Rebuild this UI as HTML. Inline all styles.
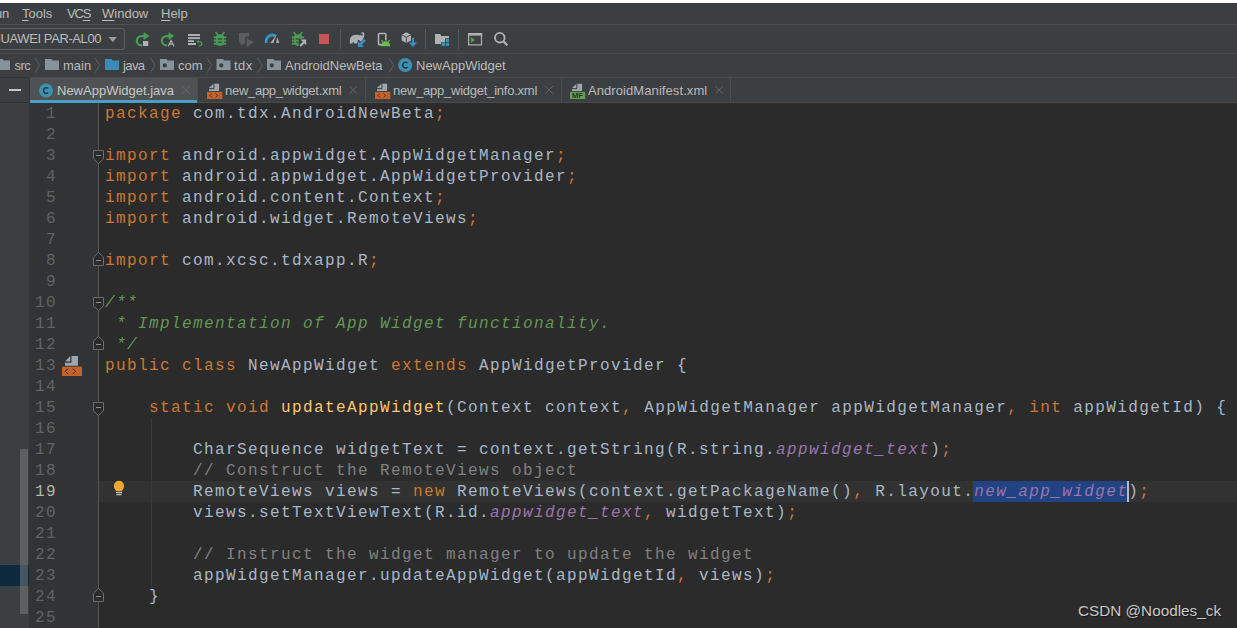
<!DOCTYPE html>
<html><head><meta charset="utf-8">
<style>
*{margin:0;padding:0;box-sizing:border-box}
html,body{width:1237px;height:628px;overflow:hidden;background:#3c3f41;font-family:"Liberation Sans",sans-serif}
.a{position:absolute}
.ui{position:absolute;color:#bbbbbb;font-size:13px;white-space:pre;line-height:16px}
.u{text-decoration:underline;text-underline-offset:2px}
.code{position:absolute;left:105px;font-family:"Liberation Mono",monospace;font-size:16px;letter-spacing:1.4px;line-height:21px;height:21px;white-space:pre;color:#a9b7c6;padding-top:1px}
.ln{position:absolute;left:29px;width:28px;text-align:right;font-family:"Liberation Mono",monospace;font-size:16px;letter-spacing:1.4px;padding-top:1px;line-height:21px;color:#606366;white-space:pre}
.k{color:#cc7832}
.c{color:#808080}
.d{color:#629755;font-style:italic}
.f{color:#9876aa;font-style:italic}
.m{color:#ffc66d}
svg{position:absolute;left:0;top:0}
</style></head><body>
<!-- chrome backgrounds -->
<div class="a" style="left:0;top:0;width:1237px;height:3px;background:#ffffff"></div>
<div class="a" style="left:0;top:24px;width:1237px;height:1px;background:#515151"></div>
<div class="a" style="left:0;top:53px;width:1237px;height:1px;background:#4b4b4b"></div>
<div class="a" style="left:0;top:77px;width:1237px;height:1px;background:#4b4b4b"></div>
<div class="a" style="left:0;top:77px;width:30px;height:1px;background:#2f3133"></div>
<div class="a" style="left:0;top:102px;width:30px;height:1px;background:#2f3133"></div>
<div class="a" style="left:29px;top:78px;width:1px;height:25px;background:#2f3133"></div>
<div class="a" style="left:30px;top:102px;width:1207px;height:1px;background:#4b4b4b"></div>
<!-- tabs -->
<div class="a" style="left:30px;top:78px;width:167px;height:22px;background:#4e5254"></div>
<div class="a" style="left:30px;top:100px;width:167px;height:3px;background:#4a9fc4"></div>
<div class="a" style="left:197px;top:78px;width:1px;height:24px;background:#4a4c4e"></div>
<div class="a" style="left:365px;top:78px;width:1px;height:24px;background:#4a4c4e"></div>
<div class="a" style="left:561px;top:78px;width:1px;height:24px;background:#4a4c4e"></div>
<div class="a" style="left:730px;top:78px;width:1px;height:24px;background:#4a4c4e"></div>
<!-- panels -->
<div class="a" style="left:29px;top:103px;width:70px;height:525px;background:#313335"></div>
<div class="a" style="left:99px;top:103px;width:1138px;height:525px;background:#2b2b2b"></div>
<div class="a" style="left:99px;top:481px;width:1138px;height:21px;background:#323232"></div>
<div class="a" style="left:973px;top:481px;width:154px;height:21px;background:#214283"></div>
<div class="a" style="left:98px;top:103px;width:1px;height:525px;background:#555759"></div>
<div class="a" style="left:0;top:565px;width:29px;height:21px;background:#0d293e"></div>
<div class="a" style="left:20px;top:449px;width:8px;height:165px;background:rgba(120,122,124,0.55)"></div>

<!-- menu -->
<div class="ui" style="left:-14.5px;top:6px">Run</div>
<div class="ui" style="left:22px;top:6px"><span class="u">T</span>ools</div>
<div class="ui" style="left:67px;top:6px;letter-spacing:-1.2px">VC<span class="u">S</span></div>
<div class="ui" style="left:102px;top:6px"><span class="u">W</span>indow</div>
<div class="ui" style="left:161px;top:6px"><span class="u">H</span>elp</div>

<!-- device combo -->
<div class="a" style="left:-5px;top:28px;width:130px;height:22px;border:1px solid #5e6060;border-radius:3px"></div>
<div class="ui" style="left:-8.5px;top:31px;letter-spacing:-0.4px">HUAWEI PAR-AL00</div>

<!-- breadcrumbs -->
<div class="ui" style="left:14.5px;top:58px;letter-spacing:-0.5px">src</div>
<div class="ui" style="left:63px;top:58px">main</div>
<div class="ui" style="left:123px;top:58px;letter-spacing:-0.6px">java</div>
<div class="ui" style="left:178px;top:58px">com</div>
<div class="ui" style="left:234px;top:58px;letter-spacing:0.4px">tdx</div>
<div class="ui" style="left:285px;top:58px">AndroidNewBeta</div>
<div class="ui" style="left:416px;top:58px">NewAppWidget</div>

<!-- tab labels -->
<div class="ui" style="left:57px;top:83px;color:#c8c8c8">NewAppWidget.java</div>
<div class="ui" style="left:225px;top:83px;letter-spacing:-0.28px">new_app_widget.xml</div>
<div class="ui" style="left:393px;top:83px;letter-spacing:-0.24px">new_app_widget_info.xml</div>
<div class="ui" style="left:588px;top:83px;letter-spacing:0.08px">AndroidManifest.xml</div>

<!-- line numbers -->
<div class="ln" style="top:103px">1</div>
<div class="ln" style="top:124px">2</div>
<div class="ln" style="top:145px">3</div>
<div class="ln" style="top:166px">4</div>
<div class="ln" style="top:187px">5</div>
<div class="ln" style="top:208px">6</div>
<div class="ln" style="top:229px">7</div>
<div class="ln" style="top:250px">8</div>
<div class="ln" style="top:271px">9</div>
<div class="ln" style="top:292px">10</div>
<div class="ln" style="top:313px">11</div>
<div class="ln" style="top:334px">12</div>
<div class="ln" style="top:355px">13</div>
<div class="ln" style="top:376px">14</div>
<div class="ln" style="top:397px">15</div>
<div class="ln" style="top:418px">16</div>
<div class="ln" style="top:439px">17</div>
<div class="ln" style="top:460px">18</div>
<div class="ln" style="top:481px;color:#b4b4b4">19</div>
<div class="ln" style="top:502px">20</div>
<div class="ln" style="top:523px">21</div>
<div class="ln" style="top:544px">22</div>
<div class="ln" style="top:565px">23</div>
<div class="ln" style="top:586px">24</div>
<div class="ln" style="top:607px">25</div>

<!-- code -->
<div class="code" style="top:103px"><span class="k">package</span> com.tdx.AndroidNewBeta<span class="k">;</span></div>
<div class="code" style="top:145px"><span class="k">import</span> android.appwidget.AppWidgetManager<span class="k">;</span></div>
<div class="code" style="top:166px"><span class="k">import</span> android.appwidget.AppWidgetProvider<span class="k">;</span></div>
<div class="code" style="top:187px"><span class="k">import</span> android.content.Context<span class="k">;</span></div>
<div class="code" style="top:208px"><span class="k">import</span> android.widget.RemoteViews<span class="k">;</span></div>
<div class="code" style="top:250px"><span class="k">import</span> com.xcsc.tdxapp.R<span class="k">;</span></div>
<div class="code" style="top:292px"><span class="d">/**</span></div>
<div class="code" style="top:313px"><span class="d"> * Implementation of App Widget functionality.</span></div>
<div class="code" style="top:334px"><span class="d"> */</span></div>
<div class="code" style="top:355px"><span class="k">public class </span>NewAppWidget <span class="k">extends </span>AppWidgetProvider {</div>
<div class="code" style="top:397px">    <span class="k">static void </span><span class="m">updateAppWidget</span>(Context context<span class="k">, </span>AppWidgetManager appWidgetManager<span class="k">, int </span>appWidgetId) {</div>
<div class="code" style="top:439px">        CharSequence widgetText = context.getString(R.string.<span class="f">appwidget_text</span>)<span class="k">;</span></div>
<div class="code" style="top:460px">        <span class="c">// Construct the RemoteViews object</span></div>
<div class="code" style="top:481px">        RemoteViews views = <span class="k">new </span>RemoteViews(context.getPackageName()<span class="k">, </span>R.layout.<span class="f">new_app_widget</span>)<span class="k">;</span></div>
<div class="code" style="top:502px">        views.setTextViewText(R.id.<span class="f">appwidget_text</span><span class="k">, </span>widgetText)<span class="k">;</span></div>
<div class="code" style="top:544px">        <span class="c">// Instruct the widget manager to update the widget</span></div>
<div class="code" style="top:565px">        appWidgetManager.updateAppWidget(appWidgetId<span class="k">, </span>views)<span class="k">;</span></div>
<div class="code" style="top:586px">    }</div>

<svg width="1237" height="628" viewBox="0 0 1237 628">
<!-- combo arrow -->
<polygon points="108.5,37 117,37 112.75,42" fill="#9a9da0"/>
<!-- toolbar icon1 -->
<path d="M144.2 36.1 L141.5 36.1 A4.65 4.65 0 0 0 141.5 45.4 L142 45.4" fill="none" stroke="#499c54" stroke-width="2.2"/>
<polygon points="143.6,32 149.4,36 143.6,40" fill="#499c54"/>
<rect x="143" y="41" width="5.2" height="5" fill="#afb1b3"/>
<!-- icon2 -->
<path d="M169.2 36.1 L166.5 36.1 A4.65 4.65 0 0 0 166.5 45.4 L167 45.4" fill="none" stroke="#499c54" stroke-width="2.2"/>
<polygon points="168.6,32 174.4,36 168.6,40" fill="#499c54"/>
<path d="M168.2 46.3 L171.1 40.6 L174 46.3 M169.4 44.2 H172.8" fill="none" stroke="#afb1b3" stroke-width="1.2"/>
<!-- icon3 -->
<rect x="188" y="34" width="12" height="2" fill="#afb1b3"/>
<rect x="188" y="37.2" width="12" height="1.9" fill="#afb1b3"/>
<rect x="188" y="40.2" width="6" height="1.8" fill="#afb1b3"/>
<rect x="188" y="43" width="8" height="2" fill="#afb1b3"/>
<path d="M197.8 41.6 Q201.8 41.2 201.8 43.8 Q201.6 45.9 199 46" fill="none" stroke="#499c54" stroke-width="1.3"/>
<polygon points="196.2,41.6 198.6,39.9 198.6,43.3" fill="#499c54"/>
<!-- icon4 bug -->
<g fill="#499c54">
<path d="M216 37 Q216 34.5 220 34.3 Q224 34.5 224 37 L224 42.2 Q223.7 45.9 220 46 Q216.3 45.9 216 42.2 Z"/>
<rect x="213.8" y="36.4" width="12.4" height="2"/>
<rect x="213.8" y="39.6" width="12.4" height="2"/>
<rect x="213.8" y="42.7" width="12.4" height="2"/>
</g>
<path d="M215.6 32.2 L218.2 35 M224.4 32.2 L221.8 35" stroke="#499c54" stroke-width="1.7"/>
<rect x="217.9" y="38.4" width="4.2" height="1.2" fill="#3c3f41"/>
<rect x="217.9" y="41.6" width="4.2" height="1.1" fill="#3c3f41"/>
<!-- icon5 shield -->
<path d="M238.9 33 L249 33 L249 36.6 L246.3 36.6 Q245.2 36.6 245.2 37.8 L245.2 42.4 Q244.8 44.7 242.7 45 Q239.2 44 238.9 40.2 Z" fill="#5a5d5f"/>
<polygon points="246.7,38 253.9,42.45 246.7,46.9" fill="#5a5d5f"/>
<!-- icon6 gauge -->
<path d="M266.4 42.9 A6.2 6.2 0 0 1 276 36.3" fill="none" stroke="#3592c4" stroke-width="2.9"/>
<polygon points="270.3,43 273.3,43 276.4,35.2" fill="#afb1b3"/>
<polygon points="277.2,37 279.3,43 276.2,43" fill="#afb1b3"/>
<!-- icon7 bug + arrow -->
<g fill="#499c54">
<path d="M294 37 Q294 34.5 298 34.3 Q302 34.5 302 37 L302 38.4 L298.6 38.4 L298.6 46 Q294.3 45.9 294 42.2 Z"/>
<rect x="291.8" y="36.4" width="12.4" height="2"/>
<rect x="291.8" y="39.6" width="6.8" height="2"/>
<rect x="291.8" y="42.7" width="6.8" height="2"/>
</g>
<path d="M293.6 32.2 L296.2 35 M302.4 32.2 L299.8 35" stroke="#499c54" stroke-width="1.7"/>
<rect x="295.9" y="38.4" width="2.7" height="1.2" fill="#3c3f41"/>
<rect x="295.9" y="41.6" width="2.7" height="1.1" fill="#3c3f41"/>
<path d="M300.2 46 L305 41.2" stroke="#afb1b3" stroke-width="2.2"/>
<polygon points="300.6,39.6 306.2,39.6 306.2,45.2" fill="#afb1b3"/>
<!-- icon8 stop -->
<rect x="319" y="34" width="10" height="10" fill="#c75450"/>
<!-- separators -->
<rect x="340" y="29" width="1" height="20" fill="#555759"/>
<rect x="425" y="29" width="1" height="20" fill="#555759"/>
<rect x="458" y="29" width="1" height="20" fill="#555759"/>
<!-- icon9 gradle elephant -->
<path d="M349.8 43.6 L349.8 40.3 Q350.2 36.8 352.6 35.6 Q355.5 34.3 358.5 35 Q359.8 35.4 360.5 35.2 Q360.8 32.3 362.4 32 Q364.4 31.9 364.4 34.5 Q364.3 37.5 362.8 39.6 L361 41.8 L359.6 40.4 L357.8 39.8 L357.2 43.6 L354.3 43.6 L353.9 42.2 L352.7 42.2 L352.4 43.6 Z" fill="#afb1b3"/>
<ellipse cx="361.8" cy="34.5" rx="0.9" ry="1.3" fill="#3c3f41"/>
<path d="M352.8 37.6 Q354 38.6 355.6 37.8" fill="none" stroke="#8c8e90" stroke-width="0.7"/>
<path d="M359.4 45.2 L365 39.9" stroke="#3592c4" stroke-width="2.5"/>
<polygon points="357.8,41 357.8,47.1 364,47.1" fill="#3592c4"/>
<!-- icon10 device -->
<path d="M381.6 44.6 L379.3 44.6 Q378.5 44.6 378.5 43.8 L378.5 34.3 Q378.5 33.5 379.3 33.5 L385 33.5 Q385.8 33.5 385.8 34.3 L385.8 40.5" fill="none" stroke="#afb1b3" stroke-width="1.6"/>
<path d="M380.8 46.2 A4.75 4.9 0 0 1 390.3 46.2 Z" fill="#6cbf4f"/>
<path d="M381.6 40 L383 42.2 M389.5 40 L388.1 42.2" stroke="#6cbf4f" stroke-width="1.1"/>
<!-- icon11 cube + arrow -->
<polygon points="406.3,32.2 411,34.8 411,40.5 406.3,43 401.7,40.5 401.7,34.8" fill="#afb1b3"/>
<path d="M401.7 34.8 L406.3 37.3 L411 34.8 M406.3 37.3 V43" fill="none" stroke="#3c3f41" stroke-width="0.9"/>
<rect x="412.1" y="37.7" width="1.9" height="6" fill="#3592c4"/>
<polygon points="409,42.6 417,42.6 413,47.1" fill="#3592c4"/>
<!-- icon12 folder -->
<path d="M435 34.1 L440.3 34.1 L441.1 35.9 L449 35.9 L449 38.3 L445 38.3 L445 42.3 L441 42.3 L441 44 L435 44 Z" fill="#afb1b3"/>
<rect x="445.8" y="38.9" width="3.2" height="3.2" fill="#3592c4"/>
<rect x="441.7" y="42.8" width="3.2" height="3.2" fill="#3592c4"/>
<rect x="445.8" y="42.8" width="3.2" height="3.2" fill="#3592c4"/>
<!-- icon13 window -->
<rect x="468.6" y="33.6" width="12.9" height="11.3" fill="none" stroke="#afb1b3" stroke-width="1.2"/>
<rect x="468" y="33" width="14.1" height="2.6" fill="#afb1b3"/>
<polygon points="470.9,37 475.2,40 470.9,43" fill="#499c54"/>
<!-- icon14 search -->
<circle cx="499.8" cy="37.7" r="4.8" fill="none" stroke="#afb1b3" stroke-width="1.9"/>
<path d="M503.3 41.3 L507.3 45.3" stroke="#afb1b3" stroke-width="2.3"/>
</svg>
<svg width="1237" height="628" viewBox="0 0 1237 628">
<path d="M-4 59 L2.5 59 L3.5 60.6 L10 60.6 L10 70 L-4 70 Z" fill="#87939a"/><path d="M35 58 L39.6 65.3 L35 72.6" fill="none" stroke="#5f6264" stroke-width="0.9"/><path d="M45 59 L51.5 59 L52.5 60.6 L59 60.6 L59 70 L45 70 Z" fill="#87939a"/><path d="M95 58 L99.6 65.3 L95 72.6" fill="none" stroke="#5f6264" stroke-width="0.9"/><path d="M105 59 L111.5 59 L112.5 60.6 L119 60.6 L119 70 L105 70 Z" fill="#3d8ab8"/><path d="M150.5 58 L155.1 65.3 L150.5 72.6" fill="none" stroke="#5f6264" stroke-width="0.9"/><path d="M160 59 L166.5 59 L167.5 60.6 L174 60.6 L174 70 L160 70 Z" fill="#87939a"/><circle cx="164.8" cy="65.4" r="2.1" fill="#3c3f41"/><path d="M207 58 L211.6 65.3 L207 72.6" fill="none" stroke="#5f6264" stroke-width="0.9"/><path d="M216.5 59 L223.0 59 L224.0 60.6 L230.5 60.6 L230.5 70 L216.5 70 Z" fill="#87939a"/><circle cx="221.3" cy="65.4" r="2.1" fill="#3c3f41"/><path d="M257.5 58 L262.1 65.3 L257.5 72.6" fill="none" stroke="#5f6264" stroke-width="0.9"/><path d="M267 59 L273.5 59 L274.5 60.6 L281 60.6 L281 70 L267 70 Z" fill="#87939a"/><circle cx="271.8" cy="65.4" r="2.1" fill="#3c3f41"/><path d="M389 58 L393.6 65.3 L389 72.6" fill="none" stroke="#5f6264" stroke-width="0.9"/><circle cx="405.2" cy="65.1" r="7" fill="#3f8fb0"/><path d="M407.4 63.199999999999996 A2.6 2.9 0 1 0 407.4 67.0" fill="none" stroke="#22343d" stroke-width="1.3"/><circle cx="46" cy="90.6" r="7" fill="#3f8fb0"/><path d="M48.2 88.69999999999999 A2.6 2.9 0 1 0 48.2 92.5" fill="none" stroke="#22343d" stroke-width="1.3"/><rect x="9" y="89" width="12" height="2" fill="#c8c8c8"/><path d="M182.2 86 L189.79999999999998 93.8 M189.79999999999998 86 L182.2 93.8" stroke="#626466" stroke-width="1"/><path d="M349.5 86 L357.1 93.8 M357.1 86 L349.5 93.8" stroke="#626466" stroke-width="1"/><path d="M545.3 86 L552.9 93.8 M552.9 86 L545.3 93.8" stroke="#626466" stroke-width="1"/><path d="M715.3 86 L722.9 93.8 M722.9 86 L715.3 93.8" stroke="#626466" stroke-width="1"/><path d="M209 88.10000000000001 L213.4 83.7 L219.1 83.7 L219.1 91.0 L209 91.0 Z" fill="#9aa7b0"/><path d="M209 88.60000000000001 L213.9 88.60000000000001 L213.9 83.7" fill="none" stroke="#3c3f41" stroke-width="1"/><rect x="207" y="91.9" width="15.3" height="7.1" fill="#c4622b"/><path d="M211.9 93.5 L209.9 95.5 L211.9 97.5 M215.6 93.5 L217.6 95.5 L215.6 97.5" fill="none" stroke="#2d2520" stroke-width="0.8"/><path d="M377 88.10000000000001 L381.4 83.7 L387.1 83.7 L387.1 91.0 L377 91.0 Z" fill="#9aa7b0"/><path d="M377 88.60000000000001 L381.9 88.60000000000001 L381.9 83.7" fill="none" stroke="#3c3f41" stroke-width="1"/><rect x="375" y="91.9" width="15.3" height="7.1" fill="#c4622b"/><path d="M379.9 93.5 L377.9 95.5 L379.9 97.5 M383.6 93.5 L385.6 95.5 L383.6 97.5" fill="none" stroke="#2d2520" stroke-width="0.8"/><path d="M572 88.10000000000001 L576.4 83.7 L582.1 83.7 L582.1 91.0 L572 91.0 Z" fill="#9aa7b0"/><path d="M572 88.60000000000001 L576.9 88.60000000000001 L576.9 83.7" fill="none" stroke="#3c3f41" stroke-width="1"/><rect x="570" y="91.9" width="15.1" height="7.1" fill="#62a04c"/><text x="572" y="98.3" font-family="Liberation Sans" font-size="7.5" font-weight="bold" fill="#2b3324">MF</text><path d="M65 361.6 L70.3 355.9 L78 355.9 L78 365.8 L65 365.8 Z" fill="#9aa7b0"/><path d="M65 362.2 L70.9 362.2 L70.9 355.9" fill="none" stroke="#313335" stroke-width="1.2"/><rect x="62" y="366.6" width="20" height="9.4" fill="#c4622b"/><path d="M68 368.6 L65.3 371.3 L68 374 M72.8 368.6 L75.5 371.3 L72.8 374" fill="none" stroke="#3a2a20" stroke-width="1"/><path d="M93.5 150.5 L103.5 150.5 L103.5 159.0 L98.5 163.5 L93.5 159.0 Z" fill="#2b2b2b" stroke="#6a6c6e" stroke-width="1"/><path d="M96 155.5 H101" stroke="#8a8c8e" stroke-width="1"/><path d="M93.5 297.5 L103.5 297.5 L103.5 306.0 L98.5 310.5 L93.5 306.0 Z" fill="#2b2b2b" stroke="#6a6c6e" stroke-width="1"/><path d="M96 302.5 H101" stroke="#8a8c8e" stroke-width="1"/><path d="M93.5 402.5 L103.5 402.5 L103.5 411.0 L98.5 415.5 L93.5 411.0 Z" fill="#2b2b2b" stroke="#6a6c6e" stroke-width="1"/><path d="M96 407.5 H101" stroke="#8a8c8e" stroke-width="1"/><path d="M93.5 265.5 L103.5 265.5 L103.5 257.0 L98.5 252.5 L93.5 257.0 Z" fill="#2b2b2b" stroke="#6a6c6e" stroke-width="1"/><path d="M96 260.5 H101" stroke="#8a8c8e" stroke-width="1"/><path d="M93.5 349.5 L103.5 349.5 L103.5 341.0 L98.5 336.5 L93.5 341.0 Z" fill="#2b2b2b" stroke="#6a6c6e" stroke-width="1"/><path d="M96 344.5 H101" stroke="#8a8c8e" stroke-width="1"/><path d="M93.5 601.5 L103.5 601.5 L103.5 593.0 L98.5 588.5 L93.5 593.0 Z" fill="#2b2b2b" stroke="#6a6c6e" stroke-width="1"/><path d="M96 596.5 H101" stroke="#8a8c8e" stroke-width="1"/><rect x="151" y="418" width="1" height="168" fill="#393b3b"/><path d="M119 480.8 A5.1 5.1 0 0 1 124.1 485.9 Q124.1 488.6 122.3 490.2 L122.3 491.2 L115.7 491.2 L115.7 490.2 Q113.9 488.6 113.9 485.9 A5.1 5.1 0 0 1 119 480.8 Z" fill="#f0a732"/><rect x="116" y="492" width="6" height="1.2" fill="#c9c9c9"/><rect x="116.5" y="494" width="5" height="1.2" fill="#c9c9c9"/><rect x="1127" y="481" width="2" height="21" fill="#bbbbbb"/></svg>
<!-- watermark -->
<div class="a" style="left:1078px;top:601px;font-size:15.3px;color:#c8c8c8;white-space:pre;line-height:20px;text-shadow:1px 1px 1px #1a1a1a">CSDN @Noodles_ck</div>
</body></html>
